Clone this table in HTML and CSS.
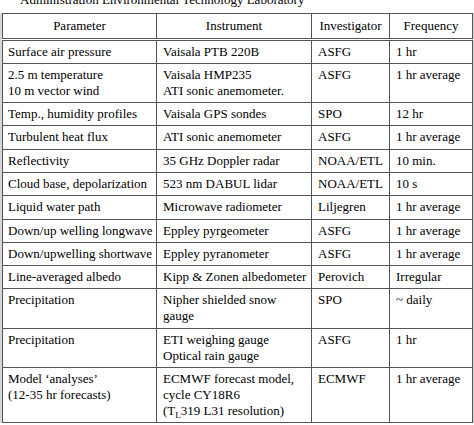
FILE: index.html
```html
<!DOCTYPE html>
<html>
<head>
<meta charset="utf-8">
<link rel="stylesheet" href="styles.css">
</head>
<body>
<div class="caption">Administration Environmental Technology Laboratory</div>
<div class="sheet">
<table class="grid">
<colgroup>
<col class="c1"><col class="c2"><col class="c3"><col class="c4">
</colgroup>
<thead>
<tr><th>Parameter</th><th>Instrument</th><th>Investigator</th><th>Frequency</th></tr>
</thead>
<tbody>
<tr><td>Surface air pressure</td><td>Vaisala PTB 220B</td><td>ASFG</td><td>1 hr</td></tr>
<tr><td>2.5 m temperature<br>10 m vector wind</td><td>Vaisala HMP235<br>ATI sonic anemometer.</td><td>ASFG</td><td>1 hr average</td></tr>
<tr><td>Temp., humidity profiles</td><td>Vaisala GPS sondes</td><td>SPO</td><td>12 hr</td></tr>
<tr><td>Turbulent heat flux</td><td>ATI sonic anemometer</td><td>ASFG</td><td>1 hr average</td></tr>
<tr><td>Reflectivity</td><td>35 GHz Doppler radar</td><td>NOAA/ETL</td><td>10 min.</td></tr>
<tr><td>Cloud base, depolarization</td><td>523 nm DABUL lidar</td><td>NOAA/ETL</td><td>10 s</td></tr>
<tr><td>Liquid water path</td><td>Microwave radiometer</td><td>Liljegren</td><td>1 hr average</td></tr>
<tr><td>Down/up welling longwave</td><td>Eppley pyrgeometer</td><td>ASFG</td><td>1 hr average</td></tr>
<tr><td>Down/upwelling shortwave</td><td>Eppley pyranometer</td><td>ASFG</td><td>1 hr average</td></tr>
<tr><td>Line-averaged albedo</td><td>Kipp &amp; Zonen albedometer</td><td>Perovich</td><td>Irregular</td></tr>
<tr><td>Precipitation</td><td>Nipher shielded snow<br>gauge</td><td>SPO</td><td>~ daily</td></tr>
<tr><td>Precipitation</td><td>ETI weighing gauge<br>Optical rain gauge</td><td>ASFG</td><td>1 hr</td></tr>
<tr><td>Model ‘analyses’<br>(12-35 hr forecasts)</td><td>ECMWF forecast model,<br>cycle CY18R6<br>(T<sub>L</sub>319 L31 resolution)</td><td>ECMWF</td><td>1 hr average</td></tr>
</tbody>
</table>
</div>
</body>
</html>
```

FILE: styles.css
```css
html, body {
  margin: 0;
  padding: 0;
  background: #ffffff;
}
body {
  width: 474px;
  height: 425px;
  overflow: hidden;
  font-family: "Liberation Serif", "Times New Roman", serif;
  font-size: 13px;
  color: #000;
}
.caption {
  margin-top: -8px;
  margin-left: 20px;
  line-height: 16px;
  height: 16px;
  white-space: nowrap;
}
.sheet {
  margin-top: 5px;
  border-left: 2px solid #d6d6d6;
  border-right: 2px solid #d6d6d6;
  width: 470px;
}
.grid {
  border-collapse: collapse;
  table-layout: fixed;
  width: 470px;
}
.c1 { width: 154px; }
.c2 { width: 155px; }
.c3 { width: 78px; }
.c4 { width: 83px; }
.grid th, .grid td {
  border: 1px solid #555;
  line-height: 16px;
  vertical-align: top;
  white-space: nowrap;
}
.grid th {
  font-weight: normal;
  text-align: center;
  padding: 4px 4px 3.5px;
  border-bottom: 3px double #555;
}
.grid td {
  text-align: left;
  padding: 3px 4px 3.3px 6px;
}
.grid td:first-child {
  padding-left: 5px;
}
sub {
  font-size: 9px;
  line-height: 0;
  vertical-align: -3px;
}
```
